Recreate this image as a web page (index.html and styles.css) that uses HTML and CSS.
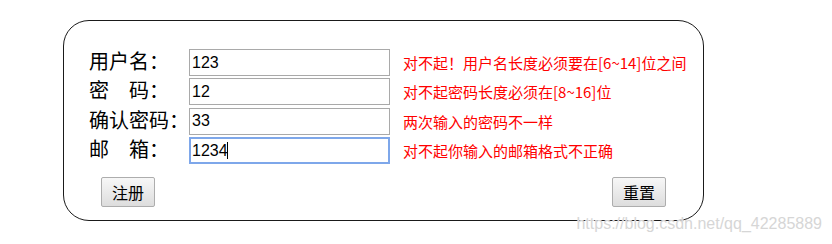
FILE: index.html
```html
<!DOCTYPE html>
<html lang="zh-CN">
<head>
<meta charset="utf-8">
<title>注册</title>
<link rel="stylesheet" href="styles.css">
</head>
<body>
<form class="reg-box">
  <div class="rows">
    <label class="lbl" for="u">用户名：</label>
    <input class="field" id="u" type="text" value="123">
    <span class="err">对不起！用户名长度必须要在[6~14]位之间</span>

    <label class="lbl" for="p">密　码：</label>
    <input class="field" id="p" type="text" value="12">
    <span class="err">对不起密码长度必须在[8~16]位</span>

    <label class="lbl" for="c">确认密码：</label>
    <input class="field" id="c" type="text" value="33">
    <span class="err">两次输入的密码不一样</span>

    <label class="lbl" for="m">邮　箱：</label>
    <span class="field-wrap">
      <input class="field focused" id="m" type="text" value="1234">
      <span class="caret"></span>
    </span>
    <span class="err">对不起你输入的邮箱格式不正确</span>
  </div>
  <div class="actions">
    <button type="button" class="btn">注册</button>
    <button type="reset" class="btn">重置</button>
  </div>
</form>
<div class="watermark">https://blog.csdn.net/qq_42285889</div>
</body>
</html>
```
FILE: styles.css
```css
html, body {
  margin: 0;
  padding: 0;
  background: #ffffff;
}
body {
  font-family: "Noto Sans CJK SC", "Microsoft YaHei", sans-serif;
  color: #000;
  position: relative;
  width: 832px;
  height: 244px;
  overflow: hidden;
}
.reg-box {
  box-sizing: border-box;
  width: 641px;
  margin: 20px 0 0 63px;
  border: 1px solid #1a1a1a;
  border-radius: 26px;
  padding: 28px 25px 13px 25px;
}
.rows {
  display: grid;
  grid-template-columns: 100px 201px auto;
  column-gap: 0;
  row-gap: 2.4px;
  align-items: center;
}
.lbl {
  font-size: 20px;
  line-height: 27px;
  white-space: nowrap;
  position: relative;
  top: -2px;
}
.field-wrap {
  position: relative;
  display: block;
  width: 201px;
  height: 27px;
}
.field {
  box-sizing: border-box;
  display: block;
  width: 201px;
  height: 27px;
  margin: 0;
  padding: 0 2px;
  border: 1px solid #a9a9a9;
  border-radius: 0;
  font-family: "Liberation Sans", Arial, sans-serif;
  font-size: 16px;
  color: #000;
  background: #fff;
  outline: none;
}
.field.focused {
  border: 2px solid #7ea7ea;
  padding: 0 1px;
}
.caret {
  position: absolute;
  left: 38px;
  top: 5px;
  width: 1px;
  height: 17px;
  background: #000;
}
.err {
  font-size: 15px;
  color: #ff0000;
  white-space: nowrap;
  line-height: 27px;
  margin-left: 13px;
}
.actions {
  display: flex;
  justify-content: space-between;
  margin: 13px 12px 0 12px;
}
.btn {
  box-sizing: border-box;
  width: 54px;
  height: 30px;
  padding: 0;
  border: 1px solid #adadad;
  border-radius: 2px;
  background: linear-gradient(#f7f7f7, #dddddd);
  font-family: "Noto Sans CJK SC", "Microsoft YaHei", sans-serif;
  font-size: 16px;
  color: #000;
}
.watermark {
  position: absolute;
  right: 10px;
  top: 215px;
  font-family: "Liberation Sans", Arial, sans-serif;
  font-size: 16px;
  line-height: 18px;
  color: #d6d6d6;
  text-shadow: 0 0 1px #fff;
}
```
